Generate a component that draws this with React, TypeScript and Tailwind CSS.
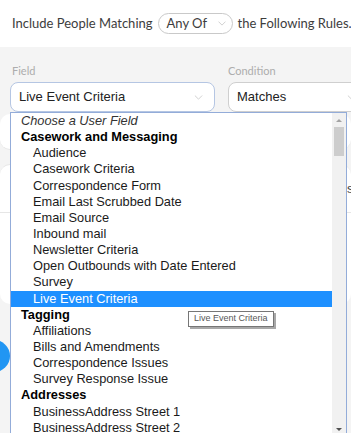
import React from "react";

type Option = { label: string; kind: "placeholder" | "group" | "item"; selected?: boolean };

const options: Option[] = [
  { label: "Choose a User Field", kind: "placeholder" },
  { label: "Casework and Messaging", kind: "group" },
  { label: "Audience", kind: "item" },
  { label: "Casework Criteria", kind: "item" },
  { label: "Correspondence Form", kind: "item" },
  { label: "Email Last Scrubbed Date", kind: "item" },
  { label: "Email Source", kind: "item" },
  { label: "Inbound mail", kind: "item" },
  { label: "Newsletter Criteria", kind: "item" },
  { label: "Open Outbounds with Date Entered", kind: "item" },
  { label: "Survey", kind: "item" },
  { label: "Live Event Criteria", kind: "item", selected: true },
  { label: "Tagging", kind: "group" },
  { label: "Affiliations", kind: "item" },
  { label: "Bills and Amendments", kind: "item" },
  { label: "Correspondence Issues", kind: "item" },
  { label: "Survey Response Issue", kind: "item" },
  { label: "Addresses", kind: "group" },
  { label: "BusinessAddress Street 1", kind: "item" },
  { label: "BusinessAddress Street 2", kind: "item" },
  { label: "BusinessAddress City", kind: "item" },
];

function Chevron({ className }: { className?: string }) {
  return (
    <svg viewBox="0 0 10 6" className={className} fill="none" stroke="currentColor" strokeWidth="1" strokeLinecap="round" strokeLinejoin="round">
      <path d="M1 1l4 4 4-4" />
    </svg>
  );
}

function OptionRow({ opt }: { opt: Option }) {
  const base = "h-[16.15px] leading-[16.15px] whitespace-nowrap";
  if (opt.kind === "placeholder") {
    return <div className={`${base} pl-[10px] italic text-[#333]`}>{opt.label}</div>;
  }
  if (opt.kind === "group") {
    return <div className={`${base} pl-[10px] font-bold text-black`}>{opt.label}</div>;
  }
  return (
    <div className={`${base} pl-[22px] ${opt.selected ? "bg-[#1e90ff] text-white" : "text-[#1a1a1a]"}`}>
      {opt.label}
    </div>
  );
}

export default function App() {
  return (
    <div className="relative w-[351px] h-[433px] overflow-hidden bg-[#f4f4f4] font-['Liberation_Sans',Arial,sans-serif]">
      {/* rule header */}
      <div className="h-[47px] bg-white flex items-center pl-[12px] gap-[5px] font-['Lato',sans-serif] text-[13px] text-[#3d3d3d] whitespace-nowrap">
        <span>Include People Matching</span>
        <div className="h-[21px] w-[75px] shrink-0 rounded-full border border-[#c9c9c9] flex items-center justify-between pl-[8px] pr-[6px]">
          <span>Any Of</span>
          <Chevron className="w-[8px] h-[5px] text-[#c6c6c6]" />
        </div>
        <span>the Following Rules.</span>
      </div>

      {/* field / condition */}
      <div className="flex pt-[17px] pl-[10px] gap-[13px]">
        <div className="w-[205px] shrink-0 flex flex-col">
          <span className="pl-[2px] font-['Lato',sans-serif] text-[11px] leading-[13px] text-[#adadad]">Field</span>
          <div className="mt-[5px] h-[30px] rounded-[8px] border border-[#b5c6e3] bg-white flex items-center justify-between pl-[8px] pr-[11px] text-[13px] text-[#222]">
            <span>Live Event Criteria</span>
            <Chevron className="w-[9px] h-[5px] text-[#c8c8c8]" />
          </div>
        </div>
        <div className="w-[140px] shrink-0 flex flex-col">
          <span className="font-['Lato',sans-serif] text-[11px] leading-[13px] text-[#adadad]">Condition</span>
          <div className="mt-[5px] h-[30px] rounded-[8px] border border-[#cfcfcf] bg-white flex items-center justify-between pl-[8px] pr-[11px] text-[13px] text-[#222]">
            <span>Matches</span>
            <Chevron className="w-[9px] h-[5px] text-[#c8c8c8]" />
          </div>
        </div>
      </div>

      {/* content behind the open list */}
      <div className="flex flex-col">
        <div className="mt-[2px] h-[36px] bg-white rounded-[10px] border-b border-[#e6e6e6]" />
        <div className="mt-[14px] h-[140px] bg-white rounded-[10px] border-t border-[#e6e6e6] flex flex-col overflow-hidden">
          <div className="mt-[16px] h-[16px] leading-[16px] pl-[347px] whitespace-nowrap text-[13px] text-[#444]">s</div>
          <div className="mt-[15px] border-t border-[#e6e6e6]" />
        </div>
        <div className="mt-[36px] -ml-[22px] w-[32px] h-[32px] rounded-full bg-[#2196f3]" />
      </div>

      {/* open select list */}
      <div className="absolute left-[10px] top-[112px] w-[337px] h-[325px] border border-[#93acd9] bg-white flex text-[12.8px]">
        <div className="flex-1 flex flex-col overflow-hidden">
          {options.map((opt) => (
            <OptionRow key={opt.label} opt={opt} />
          ))}
        </div>
        <div className="w-[14px] shrink-0 bg-[#f1f1f1] flex flex-col items-center">
          <div className="h-[14px] flex items-center justify-center">
            <div className="w-0 h-0 border-l-[3px] border-r-[3px] border-b-[3px] border-l-transparent border-r-transparent border-b-[#a3a3a3]" />
          </div>
          <div className="w-[10px] h-[29px] bg-[#cdcdcd]" />
          <div className="flex-1" />
          <div className="h-[14px] flex items-center justify-center">
            <div className="w-0 h-0 border-l-[3px] border-r-[3px] border-t-[3px] border-l-transparent border-r-transparent border-t-[#505050]" />
          </div>
        </div>
      </div>

      {/* native tooltip */}
      <div className="absolute left-[188px] top-[311px] h-[16px] px-[5px] flex items-center border border-[#767676] bg-white text-[9px] text-[#575757] whitespace-nowrap shadow-[2px_2px_0_#a8a8a8]">
        Live Event Criteria
      </div>
    </div>
  );
}
